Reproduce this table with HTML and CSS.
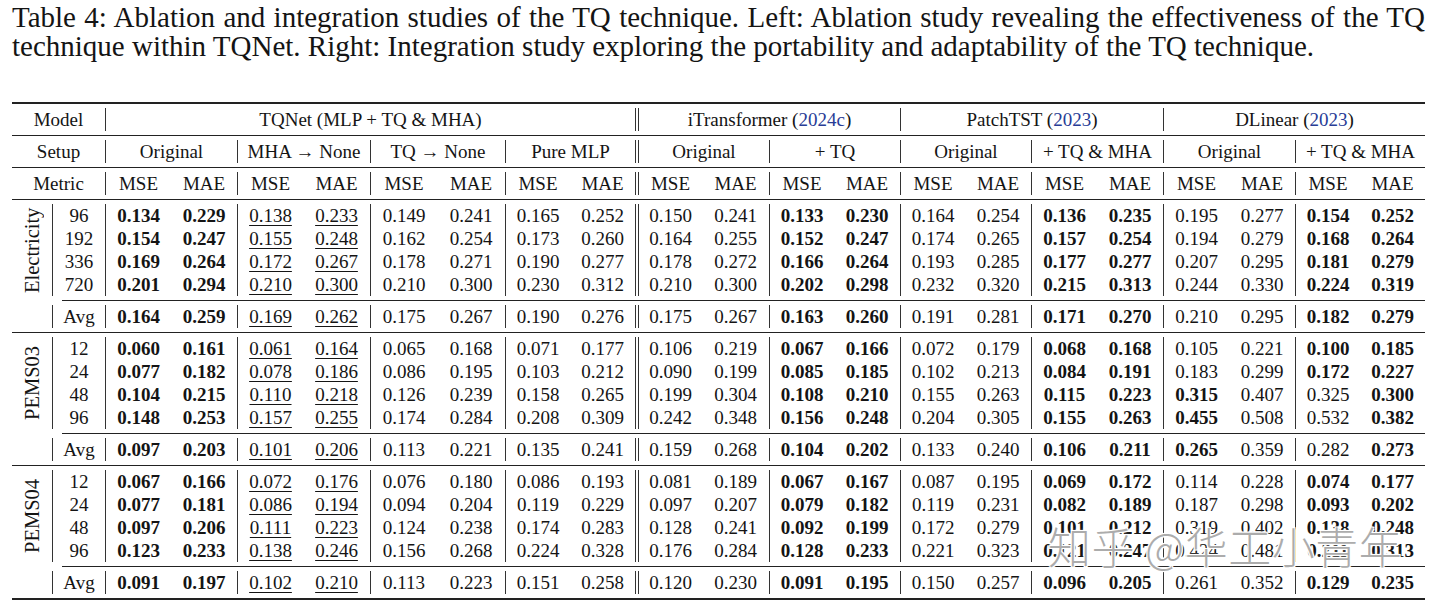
FILE: index.html
```html
<!DOCTYPE html>
<html lang="en">
<head>
<meta charset="utf-8">
<title>Table 4</title>
<link rel="stylesheet" href="styles.css">
</head>
<body>
<div class="page">
  <p class="caption">
    <span class="l1">Table 4: Ablation and integration studies of the TQ technique. Left: Ablation study revealing the effectiveness of the TQ</span>
    <span class="l2">technique within TQNet. Right: Integration study exploring the portability and adaptability of the TQ technique.</span>
  </p>

  <div class="table">
    <div class="band">
      <span class="g2">Model</span>
      <span class="g8 s">TQNet (MLP + TQ &amp; MHA)</span>
      <span class="g4 d">iTransformer (<span class="cite">2024c</span>)</span>
      <span class="g4 s">PatchTST (<span class="cite">2023</span>)</span>
      <span class="g4 s">DLinear (<span class="cite">2023</span>)</span>
    </div>
    <div class="band">
      <span class="g2">Setup</span>
      <span class="g2 s">Original</span>
      <span class="g2 s">MHA &rarr; None</span>
      <span class="g2 s">TQ &rarr; None</span>
      <span class="g2 s">Pure MLP</span>
      <span class="g2 d">Original</span>
      <span class="g2 s">+ TQ</span>
      <span class="g2 s">Original</span>
      <span class="g2 s">+ TQ &amp; MHA</span>
      <span class="g2 s">Original</span>
      <span class="g2 s">+ TQ &amp; MHA</span>
    </div>
    <div class="band">
      <span class="g2">Metric</span>
      <span class="s">MSE</span><span>MAE</span>
      <span class="s">MSE</span><span>MAE</span>
      <span class="s">MSE</span><span>MAE</span>
      <span class="s">MSE</span><span>MAE</span>
      <span class="d">MSE</span><span>MAE</span>
      <span class="s">MSE</span><span>MAE</span>
      <span class="s">MSE</span><span>MAE</span>
      <span class="s">MSE</span><span>MAE</span>
      <span class="s">MSE</span><span>MAE</span>
      <span class="s">MSE</span><span>MAE</span>
    </div>

    <!-- Electricity -->
    <div class="band">
      <span class="ds">Electricity</span>
      <span class="s">96</span>
      <span class="s b">0.134</span><span class="b">0.229</span><span class="s"><span class="u">0.138</span></span><span><span class="u">0.233</span></span><span class="s">0.149</span><span>0.241</span><span class="s">0.165</span><span>0.252</span><span class="d">0.150</span><span>0.241</span><span class="s b">0.133</span><span class="b">0.230</span><span class="s">0.164</span><span>0.254</span><span class="s b">0.136</span><span class="b">0.235</span><span class="s">0.195</span><span>0.277</span><span class="s b">0.154</span><span class="b">0.252</span>
      <span class="s">192</span>
      <span class="s b">0.154</span><span class="b">0.247</span><span class="s"><span class="u">0.155</span></span><span><span class="u">0.248</span></span><span class="s">0.162</span><span>0.254</span><span class="s">0.173</span><span>0.260</span><span class="d">0.164</span><span>0.255</span><span class="s b">0.152</span><span class="b">0.247</span><span class="s">0.174</span><span>0.265</span><span class="s b">0.157</span><span class="b">0.254</span><span class="s">0.194</span><span>0.279</span><span class="s b">0.168</span><span class="b">0.264</span>
      <span class="s">336</span>
      <span class="s b">0.169</span><span class="b">0.264</span><span class="s"><span class="u">0.172</span></span><span><span class="u">0.267</span></span><span class="s">0.178</span><span>0.271</span><span class="s">0.190</span><span>0.277</span><span class="d">0.178</span><span>0.272</span><span class="s b">0.166</span><span class="b">0.264</span><span class="s">0.193</span><span>0.285</span><span class="s b">0.177</span><span class="b">0.277</span><span class="s">0.207</span><span>0.295</span><span class="s b">0.181</span><span class="b">0.279</span>
      <span class="s">720</span>
      <span class="s b">0.201</span><span class="b">0.294</span><span class="s"><span class="u">0.210</span></span><span><span class="u">0.300</span></span><span class="s">0.210</span><span>0.300</span><span class="s">0.230</span><span>0.312</span><span class="d">0.210</span><span>0.300</span><span class="s b">0.202</span><span class="b">0.298</span><span class="s">0.232</span><span>0.320</span><span class="s b">0.215</span><span class="b">0.313</span><span class="s">0.244</span><span>0.330</span><span class="s b">0.224</span><span class="b">0.319</span>
    </div>
    <div class="cmid"></div>
    <div class="band">
      <span></span><span class="s">Avg</span>
      <span class="s b">0.164</span><span class="b">0.259</span><span class="s"><span class="u">0.169</span></span><span><span class="u">0.262</span></span><span class="s">0.175</span><span>0.267</span><span class="s">0.190</span><span>0.276</span><span class="d">0.175</span><span>0.267</span><span class="s b">0.163</span><span class="b">0.260</span><span class="s">0.191</span><span>0.281</span><span class="s b">0.171</span><span class="b">0.270</span><span class="s">0.210</span><span>0.295</span><span class="s b">0.182</span><span class="b">0.279</span>
    </div>

    <!-- PEMS03 -->
    <div class="band">
      <span class="ds">PEMS03</span>
      <span class="s">12</span>
      <span class="s b">0.060</span><span class="b">0.161</span><span class="s"><span class="u">0.061</span></span><span><span class="u">0.164</span></span><span class="s">0.065</span><span>0.168</span><span class="s">0.071</span><span>0.177</span><span class="d">0.106</span><span>0.219</span><span class="s b">0.067</span><span class="b">0.166</span><span class="s">0.072</span><span>0.179</span><span class="s b">0.068</span><span class="b">0.168</span><span class="s">0.105</span><span>0.221</span><span class="s b">0.100</span><span class="b">0.185</span>
      <span class="s">24</span>
      <span class="s b">0.077</span><span class="b">0.182</span><span class="s"><span class="u">0.078</span></span><span><span class="u">0.186</span></span><span class="s">0.086</span><span>0.195</span><span class="s">0.103</span><span>0.212</span><span class="d">0.090</span><span>0.199</span><span class="s b">0.085</span><span class="b">0.185</span><span class="s">0.102</span><span>0.213</span><span class="s b">0.084</span><span class="b">0.191</span><span class="s">0.183</span><span>0.299</span><span class="s b">0.172</span><span class="b">0.227</span>
      <span class="s">48</span>
      <span class="s b">0.104</span><span class="b">0.215</span><span class="s"><span class="u">0.110</span></span><span><span class="u">0.218</span></span><span class="s">0.126</span><span>0.239</span><span class="s">0.158</span><span>0.265</span><span class="d">0.199</span><span>0.304</span><span class="s b">0.108</span><span class="b">0.210</span><span class="s">0.155</span><span>0.263</span><span class="s b">0.115</span><span class="b">0.223</span><span class="s b">0.315</span><span>0.407</span><span class="s">0.325</span><span class="b">0.300</span>
      <span class="s">96</span>
      <span class="s b">0.148</span><span class="b">0.253</span><span class="s"><span class="u">0.157</span></span><span><span class="u">0.255</span></span><span class="s">0.174</span><span>0.284</span><span class="s">0.208</span><span>0.309</span><span class="d">0.242</span><span>0.348</span><span class="s b">0.156</span><span class="b">0.248</span><span class="s">0.204</span><span>0.305</span><span class="s b">0.155</span><span class="b">0.263</span><span class="s b">0.455</span><span>0.508</span><span class="s">0.532</span><span class="b">0.382</span>
    </div>
    <div class="cmid"></div>
    <div class="band">
      <span></span><span class="s">Avg</span>
      <span class="s b">0.097</span><span class="b">0.203</span><span class="s"><span class="u">0.101</span></span><span><span class="u">0.206</span></span><span class="s">0.113</span><span>0.221</span><span class="s">0.135</span><span>0.241</span><span class="d">0.159</span><span>0.268</span><span class="s b">0.104</span><span class="b">0.202</span><span class="s">0.133</span><span>0.240</span><span class="s b">0.106</span><span class="b">0.211</span><span class="s b">0.265</span><span>0.359</span><span class="s">0.282</span><span class="b">0.273</span>
    </div>

    <!-- PEMS04 -->
    <div class="band">
      <span class="ds">PEMS04</span>
      <span class="s">12</span>
      <span class="s b">0.067</span><span class="b">0.166</span><span class="s"><span class="u">0.072</span></span><span><span class="u">0.176</span></span><span class="s">0.076</span><span>0.180</span><span class="s">0.086</span><span>0.193</span><span class="d">0.081</span><span>0.189</span><span class="s b">0.067</span><span class="b">0.167</span><span class="s">0.087</span><span>0.195</span><span class="s b">0.069</span><span class="b">0.172</span><span class="s">0.114</span><span>0.228</span><span class="s b">0.074</span><span class="b">0.177</span>
      <span class="s">24</span>
      <span class="s b">0.077</span><span class="b">0.181</span><span class="s"><span class="u">0.086</span></span><span><span class="u">0.194</span></span><span class="s">0.094</span><span>0.204</span><span class="s">0.119</span><span>0.229</span><span class="d">0.097</span><span>0.207</span><span class="s b">0.079</span><span class="b">0.182</span><span class="s">0.119</span><span>0.231</span><span class="s b">0.082</span><span class="b">0.189</span><span class="s">0.187</span><span>0.298</span><span class="s b">0.093</span><span class="b">0.202</span>
      <span class="s">48</span>
      <span class="s b">0.097</span><span class="b">0.206</span><span class="s"><span class="u">0.111</span></span><span><span class="u">0.223</span></span><span class="s">0.124</span><span>0.238</span><span class="s">0.174</span><span>0.283</span><span class="d">0.128</span><span>0.241</span><span class="s b">0.092</span><span class="b">0.199</span><span class="s">0.172</span><span>0.279</span><span class="s b">0.101</span><span class="b">0.212</span><span class="s">0.319</span><span>0.402</span><span class="s b">0.138</span><span class="b">0.248</span>
      <span class="s">96</span>
      <span class="s b">0.123</span><span class="b">0.233</span><span class="s"><span class="u">0.138</span></span><span><span class="u">0.246</span></span><span class="s">0.156</span><span>0.268</span><span class="s">0.224</span><span>0.328</span><span class="d">0.176</span><span>0.284</span><span class="s b">0.128</span><span class="b">0.233</span><span class="s">0.221</span><span>0.323</span><span class="s b">0.121</span><span class="b">0.247</span><span class="s">0.424</span><span>0.481</span><span class="s b">0.211</span><span class="b">0.313</span>
    </div>
    <div class="cmid"></div>
    <div class="band">
      <span></span><span class="s">Avg</span>
      <span class="s b">0.091</span><span class="b">0.197</span><span class="s"><span class="u">0.102</span></span><span><span class="u">0.210</span></span><span class="s">0.113</span><span>0.223</span><span class="s">0.151</span><span>0.258</span><span class="d">0.120</span><span>0.230</span><span class="s b">0.091</span><span class="b">0.195</span><span class="s">0.150</span><span>0.257</span><span class="s b">0.096</span><span class="b">0.205</span><span class="s">0.261</span><span>0.352</span><span class="s b">0.129</span><span class="b">0.235</span>
    </div>
  </div>
</div>
<div class="watermark">知乎 @华工小青年</div>
</body>
</html>
```

FILE: styles.css
```css
* {
  box-sizing: border-box;
  margin: 0;
  padding: 0;
}

html,
body {
  background: #fff;
}

body {
  position: relative;
  width: 1440px;
  height: 607px;
  overflow: hidden;
  font-family: "Liberation Serif", "Times New Roman", serif;
  color: #141414;
}

.page {
  padding: 3px 15px 0 12px;
}

.caption {
  width: 1413px;
  font-size: 29px;
  line-height: 29px;
}

.caption .l1 {
  display: block;
  text-align: justify;
  text-align-last: justify;
}

.caption .l2 {
  display: block;
}

.table {
  width: 1413px;
  margin-top: 41px;
  border-top: 2px solid #222;
  border-bottom: 2px solid #222;
  font-size: 19px;
}

.band {
  display: grid;
  grid-template-columns: 40px 53px 66px 66px 66px 67px 67px 68px 65px 65px 67px 67px 65px 66px 65px 66px 66px 66px 66px 66px 65px 65px;
  grid-auto-rows: 23px;
  padding: 4px 0;
  line-height: 23px;
  text-align: center;
  white-space: nowrap;
}

.band + .band {
  border-top: 1px solid #222;
}

.cmid {
  height: 1px;
  margin-left: 50px;
  background: #222;
}

.s {
  border-left: 1px solid #333;
}

.d {
  border-left: 4px double #333;
}

.b {
  font-weight: bold;
}

.u {
  text-decoration: underline;
  text-decoration-thickness: 1px;
  text-underline-offset: 3px;
}

.g2 {
  grid-column: span 2;
}

.g4 {
  grid-column: span 4;
}

.g8 {
  grid-column: span 8;
}

.ds {
  grid-row: span 4;
  display: flex;
  align-items: center;
  justify-content: center;
  font-size: 20.5px;
  writing-mode: vertical-rl;
  transform: rotate(180deg);
}

.cite {
  color: #283c96;
}

.watermark {
  position: absolute;
  left: 1048px;
  top: 517px;
  font-family: "Noto Sans CJK SC", sans-serif;
  font-size: 43px;
  font-weight: 300;
  line-height: 56px;
  letter-spacing: 0.5px;
  color: rgba(150, 150, 150, 0.78);
  text-shadow: 1px 1px 0 #fff, -1px -1px 0 #fff, 1px -1px 0 #fff, -1px 1px 0 #fff, 0 0 3px #fff;
  white-space: nowrap;
}
```
